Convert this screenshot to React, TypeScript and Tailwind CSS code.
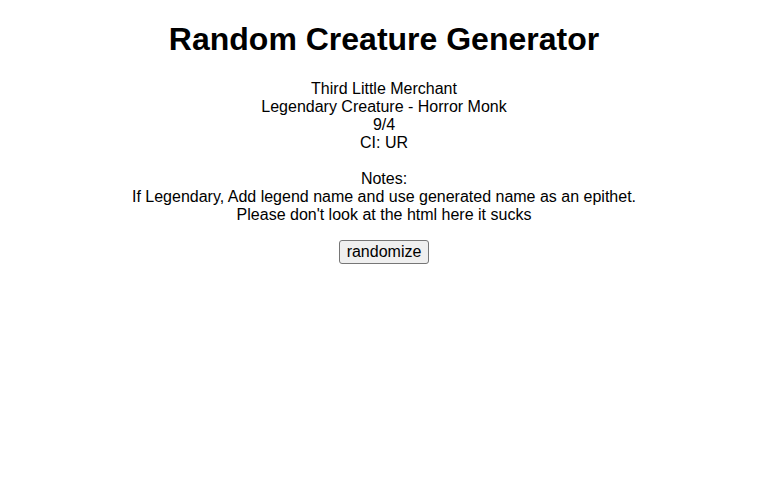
export default function App() {
  return (
    <div className="min-h-[480px] bg-white text-black text-center" style={{ fontFamily: '"Liberation Sans", Arial, sans-serif' }}>
      <h1 className="pt-[21px] pb-[22px] text-[32px] leading-[37px] font-bold">Random Creature Generator</h1>
      <div className="text-[16px] leading-[18px]">
        <div>Third Little Merchant</div>
        <div>Legendary Creature - Horror Monk</div>
        <div>9/4</div>
        <div>CI: UR</div>
        <div>&nbsp;</div>
        <div>Notes:</div>
        <div>If Legendary, Add legend name and use generated name as an epithet.</div>
        <div>Please don't look at the html here it sucks</div>
      </div>
      <div className="mt-[16px] flex justify-center">
        <button className="h-[24px] px-[7px] text-[16px] leading-[18px] bg-[#efefef] border border-[#767676] rounded-[3px] text-black">
          randomize
        </button>
      </div>
    </div>
  );
}
